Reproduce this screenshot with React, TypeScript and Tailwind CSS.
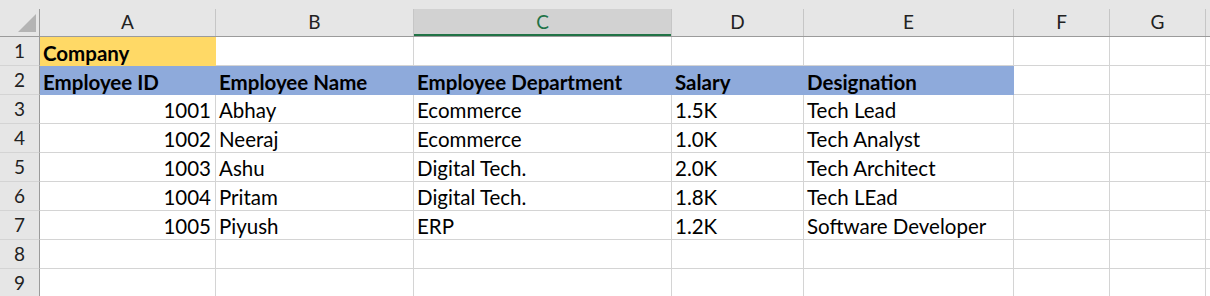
const cols = [
  { key: "A", w: "w-[176px]" },
  { key: "B", w: "w-[198px]" },
  { key: "C", w: "w-[258px]" },
  { key: "D", w: "w-[132px]" },
  { key: "E", w: "w-[210px]" },
  { key: "F", w: "w-[96px]" },
  { key: "G", w: "w-[96px]" },
];

type Cell = { text?: string; right?: boolean; bold?: boolean; fill?: string };

const rows: Cell[][] = [
  [{ text: "Company", bold: true, fill: "bg-[#ffd966]" }],
  [
    { text: "Employee ID", bold: true, fill: "bg-[#8eaadb]" },
    { text: "Employee Name", bold: true, fill: "bg-[#8eaadb]" },
    { text: "Employee Department", bold: true, fill: "bg-[#8eaadb]" },
    { text: "Salary", bold: true, fill: "bg-[#8eaadb]" },
    { text: "Designation", bold: true, fill: "bg-[#8eaadb]" },
  ],
  [{ text: "1001", right: true }, { text: "Abhay" }, { text: "Ecommerce" }, { text: "1.5K" }, { text: "Tech Lead" }],
  [{ text: "1002", right: true }, { text: "Neeraj" }, { text: "Ecommerce" }, { text: "1.0K" }, { text: "Tech Analyst" }],
  [{ text: "1003", right: true }, { text: "Ashu" }, { text: "Digital Tech." }, { text: "2.0K" }, { text: "Tech Architect" }],
  [{ text: "1004", right: true }, { text: "Pritam" }, { text: "Digital Tech." }, { text: "1.8K" }, { text: "Tech LEad" }],
  [{ text: "1005", right: true }, { text: "Piyush" }, { text: "ERP" }, { text: "1.2K" }, { text: "Software Developer" }],
  [],
  [],
];

function ColHeader({ label, w }: { label: string; w: string }) {
  const selected = label === "C";
  return (
    <div
      className={`${w} flex h-full shrink-0 items-center justify-center border-r border-[#c6c6c6] ${
        selected ? "bg-[#d2d2d2] text-[#217346] shadow-[inset_0_-2px_0_#217346]" : "text-[#222]"
      }`}
    >
      {label}
    </div>
  );
}

function Row({ n, cells }: { n: number; cells: Cell[] }) {
  return (
    <div className="flex h-[29px]">
      <div className="flex w-[40px] shrink-0 items-center justify-center border-r border-b border-[#9b9b9b] border-b-[#d4d4d4] bg-[#e6e6e6] text-[#222]">
        {n}
      </div>
      {cols.map((c, i) => {
        const cell = cells[i] || {};
        const filled = !!cell.fill;
        return (
          <div
            key={c.key}
            className={`${c.w} flex shrink-0 items-end overflow-visible whitespace-nowrap pl-[3px] pr-[4px] pb-[1px] text-[20.5px] leading-[24px] ${
              filled ? cell.fill : "border-r border-b border-[#d4d4d4] bg-white"
            } ${cell.right ? "justify-end" : "justify-start"} ${cell.bold ? "font-bold" : ""}`}
          >
            {cell.text}
          </div>
        );
      })}
      <div className="flex-1 border-b border-[#d4d4d4] bg-white" />
    </div>
  );
}

export default function App() {
  return (
    <div className="h-[296px] w-[1210px] overflow-hidden bg-white font-['Lato',sans-serif] text-[19px] text-black">
      <div className="h-[9px] bg-[#e6e6e6]" />
      <div className="flex h-[28px] border-b border-[#9b9b9b] bg-[#e6e6e6]">
        <div className="relative w-[40px] shrink-0 border-r border-[#9b9b9b]">
          <svg width="18" height="18" viewBox="0 0 18 18" className="absolute bottom-[4px] right-[3px]">
            <polygon points="18,0 18,18 0,18" fill="#b4b4b4" />
          </svg>
        </div>
        {cols.map((c) => (
          <ColHeader key={c.key} label={c.key} w={c.w} />
        ))}
        <div className="flex-1" />
      </div>
      {Array.from({ length: 9 }, (_, i) => (
        <Row key={i} n={i + 1} cells={rows[i]} />
      ))}
    </div>
  );
}
